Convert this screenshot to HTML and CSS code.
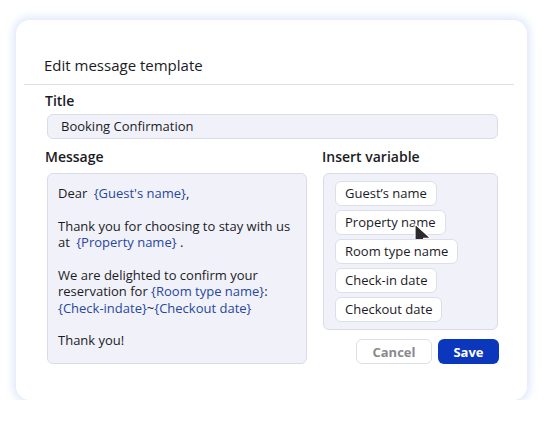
FILE: index.html
```html
<!DOCTYPE html>
<html>
<head>
    <link rel="stylesheet" href="styles.css">
</head>
<body>
    <div class="card">
        <div class="card-head">
            <h2>Edit message template</h2>
        </div>
        <div class="card-body">
            <label class="lbl">Title</label>
            <div class="title-input">Booking Confirmation</div>

            <div class="cols">
                <div class="col-msg">
                    <label class="lbl">Message</label>
                    <div class="msg-box">
                        <p>Dear <span class="var gap">{Guest's name}</span>,</p>
                        <p>Thank you for choosing to stay with us<br>at <span class="var gap">{Property name}</span> .</p>
                        <p>We are delighted to confirm your<br>reservation for <span class="var">{Room type name}</span>:<br><span class="var">{Check-indate}</span>~<span class="var">{Checkout date}</span></p>
                        <p>Thank you!</p>
                    </div>
                </div>
                <div class="col-var">
                    <label class="lbl">Insert variable</label>
                    <div class="var-box">
                        <span class="chip">Guest’s name</span>
                        <span class="chip">Property name
                            <svg class="pointer" width="20" height="27" viewBox="0 0 20 27">
                                <path d="M2 1 L2 21 L7 16.5 L11 24.5 L14.5 23 L10.6 15.3 L17.5 15 Z" fill="#2b2b2b" stroke="#fff" stroke-width="1.2" stroke-linejoin="round"/>
                            </svg>
                        </span>
                        <span class="chip">Room type name</span>
                        <span class="chip">Check-in date</span>
                        <span class="chip">Checkout date</span>
                    </div>
                    <div class="actions">
                        <button class="btn-cancel">Cancel</button>
                        <button class="btn-save">Save</button>
                    </div>
                </div>
            </div>
        </div>
    </div>
</body>
</html>
```

FILE: styles.css
```css
body {
    margin: 0;
    background: #fff;
    font-family: "Open Sans", sans-serif;
    color: #1b1b1f;
}
.card {
    margin: 20px 17px 0 16px;
    height: 380px;
    background: #fff;
    border-radius: 14px;
    box-shadow: 0 0 8px 3px rgba(200, 215, 245, 0.6);
}
.card-head {
    margin: 0 13px 0 8px;
    padding: 36px 0 0 20px;
    height: 28px;
    border-bottom: 1px solid #dfe0e8;
}
.card-head h2 {
    margin: 0;
    font-size: 15px;
    font-weight: 500;
    line-height: 18px;
}
.card-body {
    padding: 7px 29px 0 29px;
}
.lbl {
    display: block;
    font-size: 14px;
    font-weight: 600;
    line-height: 18px;
}
.title-input {
    margin: 4px 0 0 2px;
    height: 23px;
    line-height: 23px;
    padding-left: 13px;
    font-size: 13px;
    background: #f1f2f9;
    border: 1px solid #d9dbe8;
    border-radius: 6px;
}
.cols {
    display: grid;
    grid-template-columns: 262px 176px;
    gap: 15px;
    margin-top: 9px;
}
.col-msg .lbl,
.col-var .lbl {
    margin-bottom: 7px;
}
.msg-box {
    margin-left: 2px;
    height: 189px;
    padding: 0 10px;
    background: #f1f2f9;
    border: 1px solid #d9dbe8;
    border-radius: 6px;
    font-size: 13px;
    line-height: 16.5px;
}
.msg-box p {
    margin: 11px 0 16px;
}
.var {
    color: #27479e;
}
.var.gap {
    margin-left: 3px;
}
.var-box {
    margin-left: 1px;
    height: 148px;
    padding: 7px 11px 0;
    display: flex;
    flex-direction: column;
    align-items: flex-start;
    gap: 4px;
    background: #f1f2f9;
    border: 1px solid #d9dbe8;
    border-radius: 6px;
}
.chip {
    position: relative;
    height: 23px;
    line-height: 23px;
    padding: 0 9px;
    font-size: 13px;
    background: #fff;
    border: 1px solid #dcdfea;
    border-radius: 6px;
}
.pointer {
    position: absolute;
    left: 77px;
    top: 12px;
}
.actions {
    display: flex;
    justify-content: flex-end;
    gap: 6px;
    margin: 9px -1px 0 0;
}
.actions button {
    height: 25px;
    font-family: "Open Sans", sans-serif;
    font-size: 13px;
    font-weight: 700;
    border-radius: 6px;
    cursor: pointer;
}
.btn-cancel {
    width: 76px;
    background: #fff;
    color: #8a8a8e;
    border: 1px solid #dcdfea;
}
.btn-save {
    width: 61px;
    background: #0b37bd;
    color: #fff;
    border: none;
}
```
